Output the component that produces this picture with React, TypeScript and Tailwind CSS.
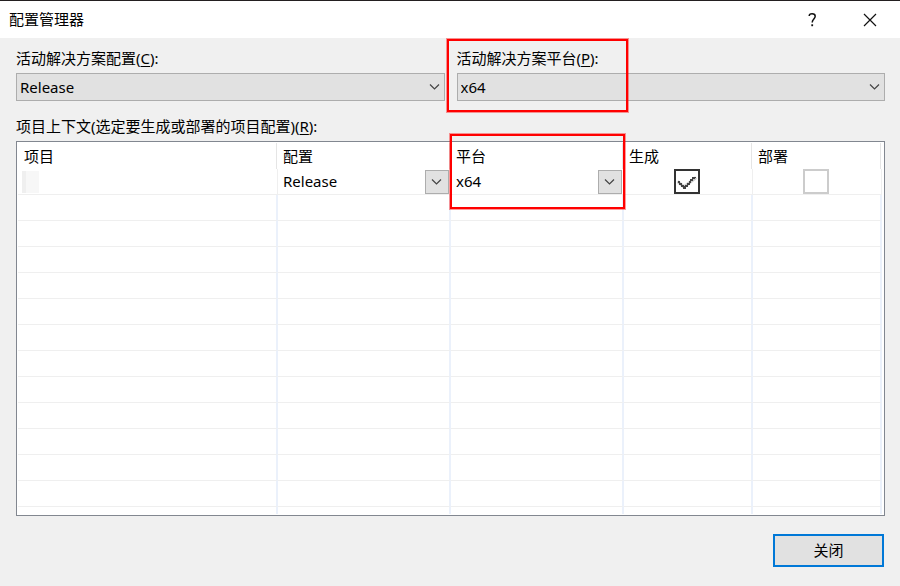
import { useState } from "react";
import type { ReactNode } from "react";

const emptyRows = Array.from({ length: 12 }, (_, i) => i);

const Chevron = () => (
  <svg width="12" height="8" viewBox="0 0 12 8" fill="none" stroke="#444444" strokeWidth="1.2" aria-hidden="true">
    <path d="M1 1.5 L5.5 6 L10 1.5" />
  </svg>
);

// Red frame drawn over the parts that need attention
const Highlight = ({ className }: { className: string }) => (
  <span
    aria-hidden="true"
    className={`pointer-events-none absolute z-10 border-2 border-[#ff0000] ring-1 ring-[#ff0000]/40 ${className}`}
  />
);

interface FieldProps {
  id: string;
  label: string;
  accessKey: string;
  options: string[];
  children?: ReactNode;
}

const SolutionField = ({ id, label, accessKey, options, children }: FieldProps) => (
  <div className="relative min-w-0 flex-1">
    <label htmlFor={id} className="block h-6 leading-[18px]">
      {label}(<u className="underline-offset-2">{accessKey}</u>):
    </label>
    <div className="grid items-center">
      <select
        id={id}
        className="col-start-1 row-start-1 h-7 w-full appearance-none border border-[#adadad] bg-[#e1e1e1] pl-[3px] pr-6"
      >
        {options.map((o) => (
          <option key={o}>{o}</option>
        ))}
      </select>
      <span className="pointer-events-none col-start-1 row-start-1 mr-1 justify-self-end">
        <Chevron />
      </span>
    </div>
    {children}
  </div>
);

const CellSelect = ({ label, options }: { label: string; options: string[] }) => (
  <div className="grid h-[25px] items-center">
    <select
      aria-label={label}
      className="col-start-1 row-start-1 h-6 w-full appearance-none bg-transparent pl-[5px] pr-7"
    >
      {options.map((o) => (
        <option key={o}>{o}</option>
      ))}
    </select>
    <span className="pointer-events-none col-start-1 row-start-1 mr-px flex size-6 items-center justify-center justify-self-end self-end border border-[#adadad] bg-[#e1e1e1]">
      <Chevron />
    </span>
  </div>
);

interface CheckProps {
  label: string;
  checked?: boolean;
  disabled?: boolean;
  onChange?: (checked: boolean) => void;
}

const CellCheck = ({ label, checked = false, disabled, onChange }: CheckProps) => (
  <div className="grid h-[25px] place-items-center pr-0.5">
    <input
      type="checkbox"
      aria-label={label}
      checked={checked}
      disabled={disabled}
      onChange={(e) => onChange?.(e.target.checked)}
      className="col-start-1 row-start-1 h-[25px] w-[26px] appearance-none border-2 border-[#333333] bg-white disabled:border-[#cccccc]"
    />
    {checked && (
      <svg width="20" height="17" viewBox="0 0 20 17" className="pointer-events-none col-start-1 row-start-1" aria-hidden="true">
        <path d="M0.5 8.5 L7 14 L19 4.5" fill="none" stroke="#999999" strokeWidth="3" opacity="0.5" />
        <path
          d="M1 8h2v2h-2z M2 10h3v2h-3z M4 12h3v2h-3z M6 13h3v3h-3z M8 12h3v2h-3z M10 10h3v2h-3z M12 8h2v2h-2z M13 6h3v2h-3z M15 4h3v2h-3z M18 4h1v1h-1z"
          fill="#444444"
        />
      </svg>
    )}
  </div>
);

const headers = ["项目", "配置", "平台", "生成", "部署"];

const App = () => {
  const [build, setBuild] = useState(true);

  return (
    <div className="min-h-screen border-t border-[#231f20] bg-[#f0f0f0] font-['Noto_Sans','Noto_Sans_CJK_SC',sans-serif] text-[15px] text-black">
      <header className="flex h-[37px] items-center bg-white pl-[9px] pr-px">
        <h1 className="flex-1">配置管理器</h1>
        <button aria-label="帮助" className="flex h-full w-[57px] items-center justify-center">
          <svg width="9" height="14" viewBox="0 0 9 14" fill="none" stroke="#111111" strokeWidth="1.5" aria-hidden="true">
            <path d="M1.2 3 C1.2 1.5 2.6 0.8 4.1 0.8 C6.2 0.8 7.2 1.8 7.2 3.3 C7.2 5.8 4.2 6.2 4.2 9.4" />
            <path d="M4.2 11.3 V13.2" strokeWidth="1.8" />
          </svg>
        </button>
        <button aria-label="关闭窗口" className="flex h-full w-[58px] items-center justify-center">
          <svg width="14" height="14" viewBox="0 0 14 14" fill="none" stroke="#111111" strokeWidth="1.2" aria-hidden="true">
            <path d="M1 1 L13 13 M13 1 L1 13" />
          </svg>
        </button>
      </header>

      <main className="pl-4 pr-[15px] pt-[11px]">
        <div className="flex gap-3">
          <SolutionField id="solution-config" label="活动解决方案配置" accessKey="C" options={["Release", "Debug"]} />
          <SolutionField id="solution-platform" label="活动解决方案平台" accessKey="P" options={["x64", "x86"]}>
            <Highlight className="-left-2.5 -top-2.5 h-[73px] w-[181px]" />
          </SolutionField>
        </div>

        <p id="contexts" className="mt-4 h-6 leading-[18px]">
          项目上下文(选定要生成或部署的项目配置)(<u className="underline-offset-2">R</u>):
        </p>
        <div className="border border-[#828790] bg-white p-px pr-0.5">
          <table aria-labelledby="contexts" className="w-full table-fixed border-separate border-spacing-0">
            <colgroup>
              <col />
              <col className="w-[173px]" />
              <col className="w-[173px]" />
              <col className="w-[129px]" />
              <col className="w-[129px]" />
            </colgroup>
            <thead>
              <tr className="h-[26px]">
                {headers.map((h) => (
                  <th key={h} className="relative p-0 pr-px text-left font-normal first:[&>div]:pl-1.5">
                    <div className="h-[26px] border-r border-[#e5e5e5] pl-[5px] leading-[26px]">{h}</div>
                    {h === "平台" && <Highlight className="-left-px -top-[9px] h-[75px] w-[175px]" />}
                  </th>
                ))}
              </tr>
            </thead>
            <tbody>
              <tr className="h-[26px] *:border-b *:border-r *:border-[#efefef] *:p-0">
                <td>
                  <div className="ml-1 flex h-[22px] w-[17px] bg-[#f7f7f7]">
                    <span className="w-1 bg-[#efefef]" />
                  </div>
                </td>
                <td>
                  <CellSelect label="配置" options={["Release", "Debug"]} />
                </td>
                <td>
                  <CellSelect label="平台" options={["x64", "x86"]} />
                </td>
                <td>
                  <CellCheck label="生成" checked={build} onChange={setBuild} />
                </td>
                <td>
                  <CellCheck label="部署" disabled />
                </td>
              </tr>
              {emptyRows.map((r) => (
                <tr key={r} className="h-[26px] *:border-b *:border-r-2 *:border-b-[#efefef] *:border-r-[#ebf1fb] *:p-0">
                  {headers.map((h) => (
                    <td key={h} />
                  ))}
                </tr>
              ))}
              <tr className="h-[7px] *:border-r-2 *:border-[#ebf1fb] *:p-0">
                {headers.map((h) => (
                  <td key={h} />
                ))}
              </tr>
            </tbody>
          </table>
        </div>

        <div className="flex justify-end pb-4 pr-px pt-[18px]">
          <button className="h-[33px] w-[111px] border-2 border-[#0078d7] bg-[#e1e1e1]">关闭</button>
        </div>
      </main>
    </div>
  );
};

export default App;
